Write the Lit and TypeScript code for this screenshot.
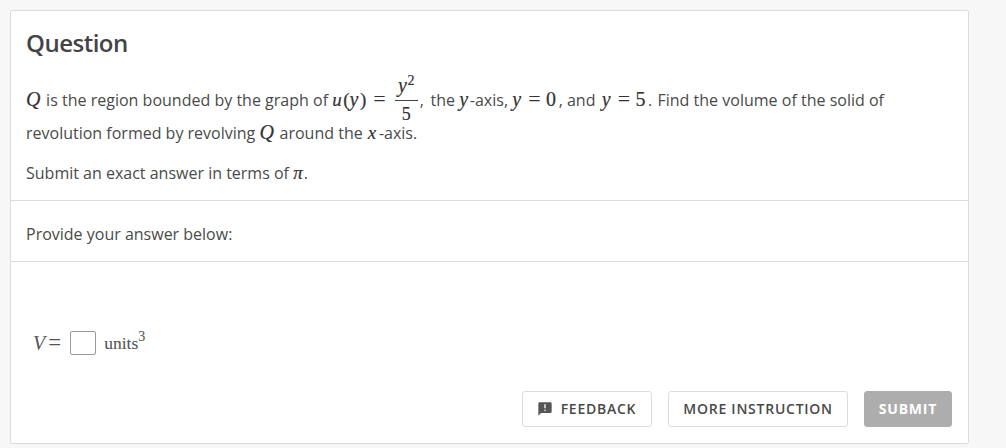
import { LitElement, html, css } from "lit";
import { customElement } from "lit/decorators.js";

@customElement("app-root")
export class AppRoot extends LitElement {
  static styles = css`
    :host { display: block; width: 1006px; height: 448px; background: #f7f7f7; font-family: "Open Sans", sans-serif; color: #4a4a4a; font-size: 16px; overflow: hidden; }
    .page { padding: 10px 37px 0 10px; }
    .card { background: #fff; border: 1px solid #dcdcdc; border-radius: 2px; height: 434px; box-sizing: border-box; display: flex; flex-direction: column; }
    .question { height: 190px; box-sizing: border-box; border-bottom: 1px solid #dcdcdc; padding: 15px 15px 0; }
    h1 { margin: 0; font-size: 24px; font-weight: 600; line-height: 33px; color: #444; letter-spacing: -0.5px; }
    .l1 { height: 33px; margin-top: 25px; line-height: 33px; white-space: nowrap; display: flex; align-items: baseline; letter-spacing: 0.01px; }
    .l2 { line-height: 33px; height: 33px; white-space: nowrap; }
    .l3 { margin-top: 7px; line-height: 33px; white-space: nowrap; }
    .m { font-family: "Liberation Serif", serif; font-size: 19px; color: #333; -webkit-text-stroke: 0.2px #333; line-height: 0; }
    .i { font-style: italic; letter-spacing: 1.2px; }
    .y { font-size: 20px; letter-spacing: 1.6px; }
    .u { letter-spacing: 1.4px; }
    .x { letter-spacing: 2.6px; margin-left: 1px; }
    .q { font-size: 20px; letter-spacing: 1.5px; }
    .eq-sign { margin: 0 5.5px; font-size: 22px; -webkit-text-stroke: 0; }
    .after-paren { margin: 0 5px 0 7px; }
    .digit { font-size: 20px; margin-right: 2.5px; }
    .gap { margin-left: 2px; }
    .period { margin-right: 1px; }
    .frac { flex: none; position: relative; width: 23px; margin: 0 2px 0 4px; height: 0; }
    .num, .den { position: absolute; left: 0; right: 0; text-align: center; line-height: 18px; }
    .num { top: -30px; letter-spacing: 0; }
    .num .y { letter-spacing: 0.5px; }
    .den { top: -1px; font-size: 18px; letter-spacing: 0; }
    .bar { position: absolute; left: 0; right: 0; top: -6px; height: 1px; background: #444; }
    .num sup { font-size: 14px; line-height: 0; font-style: normal; }
    .comma { margin-right: 2.5px; }
    .provide { height: 61px; box-sizing: border-box; border-bottom: 1px solid #dcdcdc; padding: 17px 15px 0; line-height: 33px; }
    .answer { flex: 1; display: flex; flex-direction: column; }
    .eq { display: flex; align-items: center; margin: 69px 0 0 22px; font-family: "Liberation Serif", serif; height: 24px; }
    .v { font-style: italic; font-size: 20px; color: #555; }
    .eqs { font-size: 23px; margin-left: 3px; color: #555; }
    .box { border: 1px solid #999; border-radius: 2px; margin: 0 8px 0 9px; box-sizing: border-box; width: 26px; height: 24px; }
    .units { font-size: 17.5px; color: #555; -webkit-text-stroke: 0.1px #555; }
    .units sup { font-size: 14px; line-height: 0; position: relative; top: -1px; }
    .actions { display: flex; justify-content: flex-end; gap: 16px; margin-top: 36px; padding-right: 16px; }
    .btn { height: 36px; box-sizing: border-box; background: #fff; border: 1px solid #dcdcdc; border-radius: 3px; font: 600 14px "Open Sans", sans-serif; letter-spacing: 0.75px; color: #4a4a4a; padding: 0 14px 2px; display: flex; align-items: center; gap: 8px; }
    .fb { padding-right: 15px; }
    .submit { background: #adadad; border-color: #adadad; color: #fff; font-weight: 700; letter-spacing: 0.75px; }
    svg { display: block; margin-top: 2px; }
  `;
  render() {
    return html`<div class="page"><div class="card">
      <div class="question">
        <h1>Question</h1>
        <div class="l1"><span><span class="m i q">Q</span> is the region bounded by the graph of <span class="m i u">u</span><span class="m">(</span><span class="m i y">y</span><span class="m">)</span><span class="m eq-sign after-paren">=</span></span><span class="frac"><span class="num m i"><span class="y">y</span><sup>2</sup></span><span class="bar"></span><span class="den m">5</span></span><span><span class="comma">,</span> the <span class="m i y">y</span>-axis, <span class="m i y">y</span><span class="m eq-sign">=</span><span class="m digit">0</span>, and <span class="m i y gap">y</span><span class="m eq-sign">=</span><span class="m digit">5</span><span class="period">.</span> Find the volume of the solid of</span></div>
        <div class="l2">revolution formed by revolving <span class="m i q">Q</span> around the <span class="m i x">x</span>-axis.</div>
        <div class="l3">Submit an exact answer in terms of <span class="m i">π</span>.</div>
      </div>
      <div class="provide">Provide your answer below:</div>
      <div class="answer">
        <div class="eq"><span class="v">V</span><span class="eqs">=</span><span class="box"></span><span class="units">units<sup>3</sup></span></div>
        <div class="actions">
          <button class="btn fb"><svg width="16" height="16" viewBox="0 0 24 24" fill="#555"><path d="M20 2H4c-1.1 0-2 .9-2 2v18l4-4h14c1.1 0 2-.9 2-2V4c0-1.100-.9-2-2-2zm-7 9h-2V5h2v6zm0 4h-2v-2h2v2z"/></svg>FEEDBACK</button>
          <button class="btn">MORE INSTRUCTION</button>
          <button class="btn submit">SUBMIT</button>
        </div>
      </div>
    </div></div>`;
  }
}
